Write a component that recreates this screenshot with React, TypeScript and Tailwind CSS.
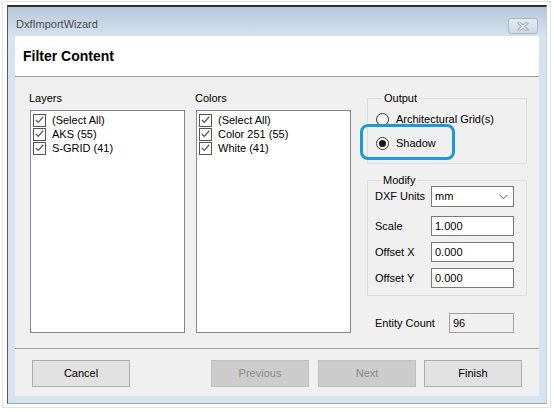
import React, { useState } from 'react';

const font = { fontFamily: '"Liberation Sans", Arial, sans-serif' };

const Check: React.FC<{ label: string }> = ({ label }) => (
  <div className="flex items-center h-[14px] pl-[1px]">
    <span className="w-[13px] h-[13px] border border-[#555] bg-white flex items-center justify-center shrink-0">
      <svg width="9" height="8" viewBox="0 0 9 8">
        <path d="M0.8 4 L3.3 6.4 L8.2 0.8" fill="none" stroke="#5a5a5a" strokeWidth="1.3" />
      </svg>
    </span>
    <span className="ml-[6px] text-[11px] leading-[13px] text-black">{label}</span>
  </div>
);

const ListCol: React.FC<{ title: string; items: string[] }> = ({ title, items }) => (
  <div className="w-[155px] flex flex-col">
    <div className="h-[18px] text-[11px] leading-[13px] -ml-[1px]">{title}</div>
    <div className="h-[223px] bg-white border border-[#828790] pt-[2px] pl-[1px]">
      {items.map(i => <Check key={i} label={i} />)}
    </div>
  </div>
);

const Radio: React.FC<{ label: string; checked?: boolean; onClick: () => void }> = ({ label, checked, onClick }) => (
  <div className="flex items-center h-[14px] cursor-default" onClick={onClick}>
    <span className="w-[13px] h-[13px] rounded-full border border-[#333] bg-white flex items-center justify-center shrink-0">
      {checked && <span className="w-[7px] h-[7px] rounded-full bg-[#1a1a1a]" />}
    </span>
    <span className="ml-[7px] text-[11px] leading-[13px]">{label}</span>
  </div>
);

const Field: React.FC<{ label: string; value: string; mt: string }> = ({ label, value, mt }) => (
  <div className={`flex items-center ${mt}`}>
    <span className="w-[56px] text-[11px] leading-[13px]">{label}</span>
    <div className="w-[83px] h-[20px] bg-white border border-[#7a7a7a] flex items-center pl-[3px] text-[11px]">{value}</div>
  </div>
);

const Btn: React.FC<{ label: string; disabled?: boolean }> = ({ label, disabled }) => (
  <button
    className={`w-[98px] h-[27px] text-[11px] border ${disabled ? 'bg-[#cccccc] border-[#bfbfbf] text-[#8a8a8a]' : 'bg-[#e1e1e1] border-[#adadad] text-black'}`}
  >
    {label}
  </button>
);

const App: React.FC = () => {
  const [output, setOutput] = useState<'grid' | 'shadow'>('shadow');

  return (
    <div className="w-[554px] h-[412px] bg-white pt-[1px] pl-[2px]" style={font}>
      <div className="w-[549px] h-[407px] border border-[#e2e2e2] pt-[3px] pl-[4px]">
        <div className="w-[540px] h-[399px] flex flex-col border-t-2 border-t-[#2e2e2e] border-l border-l-[#5a5a5a] border-b border-b-[#a8a8a8] border-r border-r-[#c9c9c9] bg-[#d6e3f0]">
          {/* title bar */}
          <div className="h-[29px] shrink-0 flex items-center justify-between pl-[8px] pr-[8px] bg-gradient-to-b from-[#b7c8d8] to-[#d5e2ef]">
            <span className="text-[11px] text-[#4a4a4a] mt-[6px]">DxfImportWizard</span>
            <div className="w-[30px] h-[16px] mt-[9px] rounded-[3px] border border-[#a9b6c4] bg-gradient-to-b from-[#e4ebf2] to-[#cfdae6] flex items-center justify-center">
              <svg width="12" height="9" viewBox="0 0 12 9">
                <path d="M2 1 L10 8 M10 1 L2 8" stroke="#8c99a6" strokeWidth="3" strokeLinecap="round" />
                <path d="M2 1 L10 8 M10 1 L2 8" stroke="#f4f7fa" strokeWidth="1.4" strokeLinecap="round" />
              </svg>
            </div>
          </div>

          {/* client area */}
          <div className="flex-1 mx-[7px] mb-[7px] flex flex-col bg-[#f0f0f0]">
            <div className="h-[40px] bg-white flex items-center pl-[8px] shrink-0">
              <span className="text-[14px] font-bold text-black">Filter Content</span>
            </div>
            <div className="h-px bg-[#a0a0a0]" />

            <div className="h-[271px] flex pl-[15px] pt-[15px]">
              <ListCol title="Layers" items={['(Select All)', 'AKS (55)', 'S-GRID (41)']} />
              <div className="w-[11px]" />
              <ListCol title="Colors" items={['(Select All)', 'Color 251 (55)', 'White (41)']} />

              <div className="w-[160px] ml-[16px] flex flex-col">
                <div className="relative">
                  <fieldset className="h-[72px] border border-[#dcdcdc] pl-[8px]">
                    <legend className="text-[11px] leading-[13px] ml-[6px] px-[2px]">Output</legend>
                    <div className="mt-[7px]">
                      <Radio label="Architectural Grid(s)" checked={output === 'grid'} onClick={() => setOutput('grid')} />
                    </div>
                    <div className="mt-[10px]">
                      <Radio label="Shadow" checked={output === 'shadow'} onClick={() => setOutput('shadow')} />
                    </div>
                  </fieldset>
                  <div className="absolute left-[-7px] top-[32px] w-[95px] h-[36px] border-[3px] border-[#1b9ad6] rounded-[8px] pointer-events-none" />
                </div>

                <fieldset className="mt-[10px] h-[122px] border border-[#dcdcdc] pl-[7px]">
                  <legend className="text-[11px] leading-[13px] ml-[6px] px-[2px]">Modify</legend>
                  <div className="flex items-center mt-[-1px]">
                    <span className="w-[56px] text-[11px] leading-[13px]">DXF Units</span>
                    <div className="w-[83px] h-[21px] bg-white border border-[#7a7a7a] flex items-center justify-between pl-[3px] pr-[5px] text-[11px]">
                      <span>mm</span>
                      <svg width="9" height="6" viewBox="0 0 9 6">
                        <path d="M0.5 0.8 L4.5 4.8 L8.5 0.8" fill="none" stroke="#555" strokeWidth="1" />
                      </svg>
                    </div>
                  </div>
                  <Field label="Scale" value="1.000" mt="mt-[9px]" />
                  <Field label="Offset X" value="0.000" mt="mt-[6px]" />
                  <Field label="Offset Y" value="0.000" mt="mt-[6px]" />
                </fieldset>

                <div className="flex items-center mt-[17px] pl-[8px]">
                  <span className="w-[74px] text-[11px] leading-[13px]">Entity Count</span>
                  <div className="w-[65px] h-[20px] bg-[#f0f0f0] border border-[#a0a0a0] flex items-center pl-[3px] text-[11px]">96</div>
                </div>
              </div>
            </div>

            <div className="h-px bg-[#a0a0a0]" />
            <div className="flex-1 flex pl-[17px] pr-[17px] pt-[11px]">
              <Btn label="Cancel" />
              <div className="flex-1" />
              <Btn label="Previous" disabled />
              <div className="w-[9px]" />
              <Btn label="Next" disabled />
              <div className="w-[8px]" />
              <Btn label="Finish" />
            </div>
          </div>
        </div>
      </div>
    </div>
  );
};

export default App;
